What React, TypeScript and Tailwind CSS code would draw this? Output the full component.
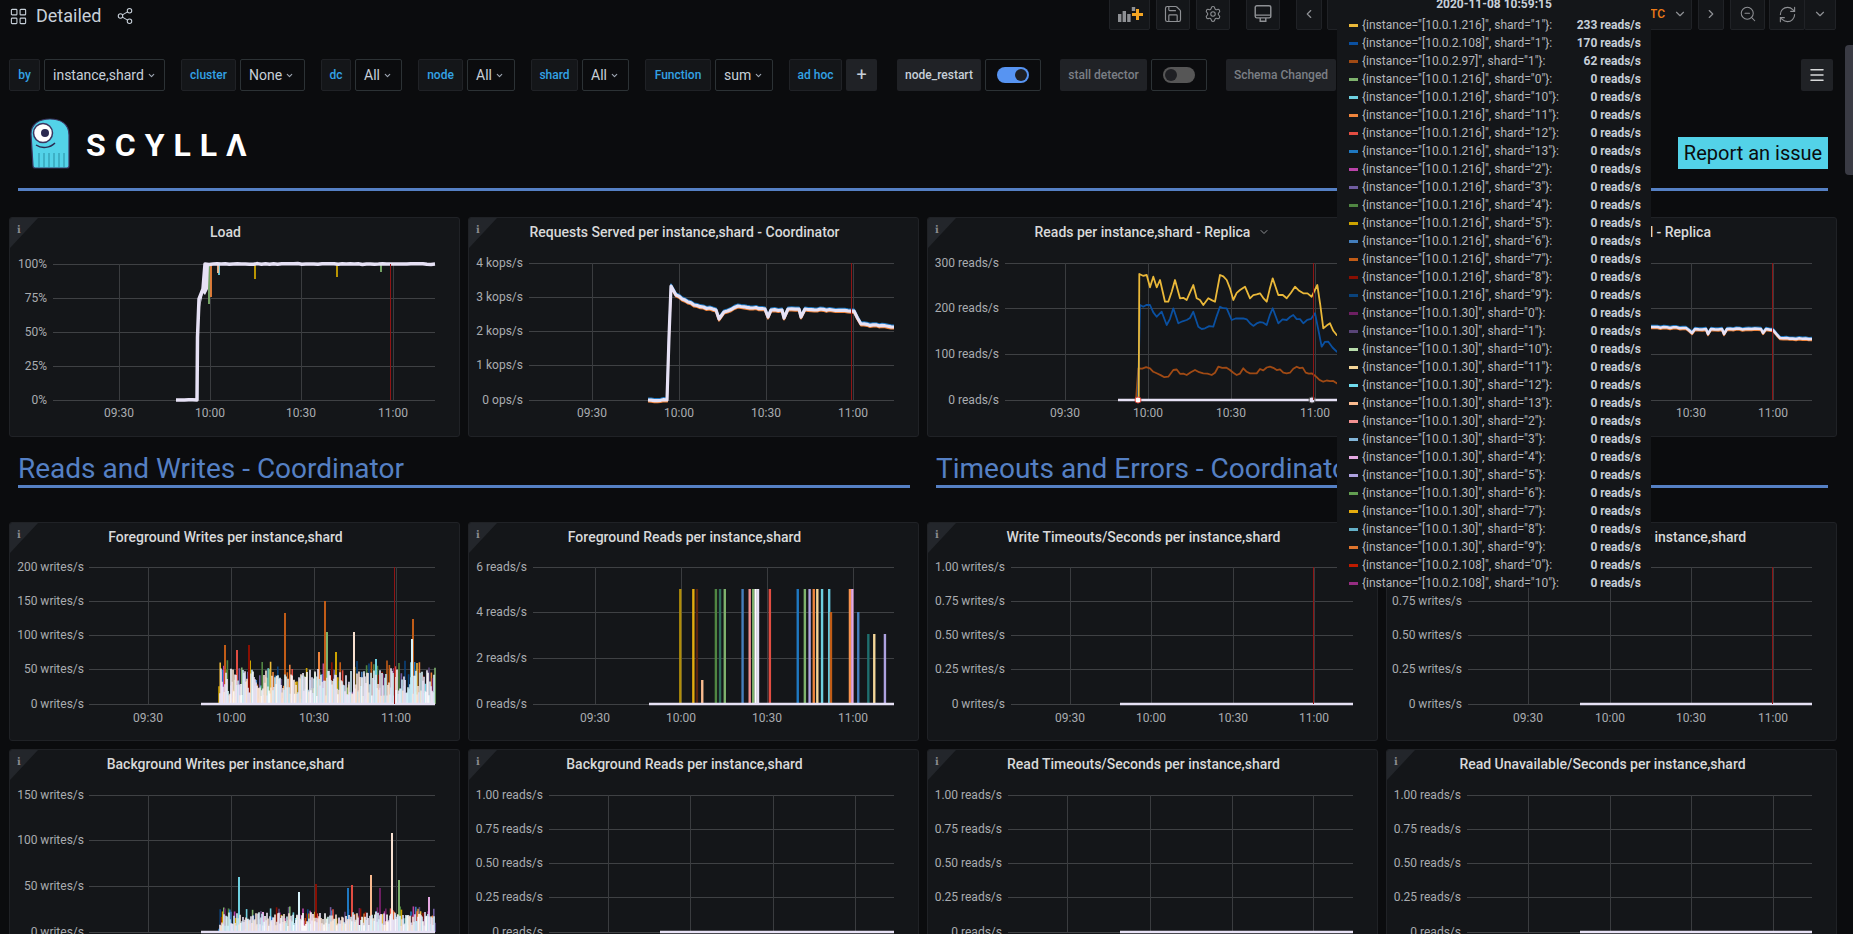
import type { ReactNode } from 'react'
import { ChevronDown, ChevronLeft, ChevronRight, LayoutGrid, Menu, RefreshCw, Save, Settings, Share2, ZoomOut } from 'lucide-react'

const palette = ['#7eb26d', '#eab839', '#6ed0e0', '#ef843c', '#e24d42', '#1f78c1', '#ba43a9', '#705da0', '#508642', '#cca300', '#447ebc', '#c15c17', '#890f02', '#0a437c', '#6d1f62', '#584477']
const pale = ['#e6e1f5', '#efe9fb', '#f8e8dc', '#d8f3fa', '#ffffff', '#e6e1f5', '#fbe3d0', '#c4e8f3']

function makeRandom(seed: number) {
  let s = seed
  return () => {
    s = (s * 16807) % 2147483647
    return (s % 10000) / 10000
  }
}

type Pt = [number, number]

// subdivide a path and add a bit of noise so it looks like a metric
function jitter(points: Pt[], amp: number, step: number, seed: number) {
  const r = makeRandom(seed)
  const out: Pt[] = []
  points.forEach((p, i) => {
    out.push(p)
    const next = points[i + 1]
    if (!next) return
    const n = Math.floor((next[0] - p[0]) / step)
    for (let k = 1; k < n; k++) {
      const t = k / n
      out.push([p[0] + (next[0] - p[0]) * t, p[1] + (next[1] - p[1]) * t + (r() - 0.5) * amp])
    }
  })
  return out.map((p) => `${p[0].toFixed(1)},${p[1].toFixed(1)}`).join(' ')
}

function Line({ d, color, w = 1.5, dy = 0 }: { d: string; color: string; w?: number; dy?: number }) {
  return <polyline points={d} fill="none" stroke={color} strokeWidth={w} strokeLinejoin="round" transform={`translate(0 ${dy})`} />
}

function Baseline({ from, y = 183 }: { from: number; y?: number }) {
  return <line x1={from} x2={426} y1={y} y2={y} stroke="#e6e1f5" strokeWidth={2.5} />
}

function Noise({ seed, from, y, high, paleHigh, floor, bigs }: { seed: number; from: number; y: number; high: number; paleHigh: number; floor: number; bigs: [number, number, string][] }) {
  const r = makeRandom(seed)
  const lines: ReactNode[] = []
  for (let x = from; x < 426; x += 1.2) {
    lines.push(<line key={`a${x}`} x1={x} x2={x} y1={y} y2={y - r() * high} stroke={palette[Math.floor(r() * palette.length)]} strokeWidth={1.6} />)
  }
  bigs.forEach(([x, top, c]) => {
    lines.push(<line key={`b${x}`} x1={x} x2={x} y1={y} y2={top} stroke={c} strokeWidth={2} />)
  })
  for (let x = from + 1; x < 426; x += 1) {
    const h = floor + r() * paleHigh
    lines.push(<line key={`c${x}`} x1={x} x2={x} y1={y} y2={y - h} stroke={pale[Math.floor(r() * pale.length)]} strokeWidth={1.6} />)
  }
  return <>{lines}</>
}

interface ChartProps {
  labelRight: number
  left: number
  yTicks: [string, number][]
  xTicks: number[]
  red?: number
  xLabels?: boolean
  children?: ReactNode
}

const timeLabels = ['09:30', '10:00', '10:30', '11:00']

function Chart({ labelRight, left, yTicks, xTicks, red, xLabels = true, children }: ChartProps) {
  const top = yTicks[0][1]
  const bottom = yTicks[yTicks.length - 1][1]
  return (
    <svg viewBox="1 31 449 188" className="block h-[188px] w-[449px]">
      {yTicks.map(([label, y]) => (
        <g key={label}>
          <line x1={left} x2={426} y1={y + 0.5} y2={y + 0.5} stroke="#3f4144" />
          <text x={labelRight} y={y + 4} textAnchor="end" fontSize={12} fill="#a9acb0">{label}</text>
        </g>
      ))}
      {xTicks.map((x, i) => (
        <g key={x}>
          <line x1={x + 0.5} x2={x + 0.5} y1={top} y2={bottom} stroke="#3a3c3f" />
          {xLabels && <text x={x} y={200} textAnchor="middle" fontSize={12} fill="#a9acb0">{timeLabels[i]}</text>}
        </g>
      ))}
      {children}
      {red !== undefined && <line x1={red + 0.5} x2={red + 0.5} y1={top} y2={bottom} stroke="#8e1515" />}
    </svg>
  )
}

function Panel({ title, caret, className, children }: { title: string; caret?: boolean; className: string; children: ReactNode }) {
  return (
    <div className={`relative overflow-hidden rounded-[3px] border border-[#202226] bg-[#141619] ${className}`}>
      <div className="absolute left-0 top-0 h-0 w-0 border-r-[28px] border-t-[30px] border-r-transparent border-t-[#23262b]" />
      <span className="absolute left-[7px] top-[3px] font-serif text-xs font-bold text-[#8a8c90]">i</span>
      <div className={`flex h-[30px] items-center justify-center gap-2 pb-[3px] text-sm font-medium text-[#d8d9da] ${caret ? '' : 'pr-[18px]'}`}>
        {title}
        {caret && <ChevronDown size={12} className="text-[#8e9094]" />}
      </div>
      {children}
    </div>
  )
}

const load = jitter([[167, 183], [188, 183], [188.5, 120], [190, 82], [194, 72], [196, 47], [426, 47]], 0.8, 4, 11)
const served = jitter([[180, 183], [199, 183], [201, 120], [203, 69], [208, 78], [226, 88], [248, 93], [251, 102], [256, 95], [270, 89], [297, 92], [300, 100], [303, 93], [314, 93], [316, 101], [320, 92], [331, 92], [333, 100], [337, 92], [386, 94], [393, 107], [426, 110]], 1.2, 3, 23)
const replica = jitter([[200, 183], [202, 90], [230, 104], [265, 110], [300, 111], [306, 116], [309, 112], [320, 112], [322, 117], [325, 112], [336, 112], [338, 117], [341, 112], [375, 112], [377, 116], [380, 112], [387, 113], [394, 121], [426, 122]], 1, 3, 31)

// zoomed pixel coordinates of the three visible read lines
const toRel = (list: number[][]): Pt[] => list.map(([x, y]) => [x / 3 - 7, y / 3 - 7])
const yellow = jitter(toRel([[656, 570], [658, 192], [680, 195], [690, 232], [700, 200], [710, 232], [720, 210], [735, 275], [745, 275], [765, 210], [780, 265], [800, 270], [820, 225], [830, 265], [850, 285], [865, 265], [885, 275], [900, 195], [920, 210], [940, 270], [960, 240], [975, 230], [990, 265], [1020, 250], [1040, 275], [1058, 205], [1075, 255], [1100, 265], [1125, 230], [1150, 250], [1175, 260], [1192, 225], [1210, 355], [1230, 340], [1250, 375], [1300, 400]]), 5, 3, 7)
const blue = jitter(toRel([[654, 570], [660, 285], [690, 285], [710, 320], [725, 305], [740, 345], [760, 295], [775, 340], [800, 330], [820, 305], [835, 350], [855, 355], [880, 350], [900, 290], [920, 295], [935, 330], [970, 325], [990, 340], [1040, 345], [1058, 295], [1075, 340], [1100, 330], [1120, 315], [1150, 340], [1185, 310], [1205, 410], [1225, 395], [1250, 425], [1300, 440]]), 5, 3, 13)
const brown = jitter(toRel([[648, 570], [655, 475], [690, 475], [710, 490], [745, 500], [760, 480], [800, 495], [825, 480], [850, 490], [875, 495], [895, 470], [930, 480], [950, 495], [970, 475], [1000, 490], [1050, 470], [1100, 490], [1130, 470], [1175, 490], [1210, 515], [1250, 520], [1300, 525]]), 4, 3, 17)

const fgReads: [number, string, number][] = [
  [1147, '#b08d0a', 67], [1169, '#e5ac0e', 67], [1175, '#5a2410', 67], [1184, '#f9ba8f', 158], [1207, '#508642', 67], [1214, '#2f6f5a', 67], [1222, '#7eb26d', 67],
  [1252, '#447ebc', 67], [1264, '#f29191', 67], [1270, '#7eb26d', 67], [1274, '#ffffff', 67], [1278, '#e6e1f5', 67], [1298, '#e24d42', 67], [1345, '#1f78c1', 67],
  [1357, '#7eb26d', 67], [1365, '#aea2e0', 67], [1372, '#ef843c', 67], [1378, '#f4d598', 67], [1386, '#6ed0e0', 67], [1398, '#65c5db', 67], [1401, '#c15c17', 90],
  [1433, '#f9934e', 67], [1437, '#e5a8e2', 67], [1447, '#447ebc', 90], [1464, '#1f6f6f', 112], [1474, '#f4d598', 112], [1492, '#aea2e0', 112],
]

const pctTicks: [string, number][] = [['100%', 47], ['75%', 81], ['50%', 115], ['25%', 149], ['0%', 183]]
const unitTicks = (unit: string, ys: number[]): [string, number][] => ['1.00', '0.75', '0.50', '0.25', '0'].map((v, i) => [`${v} ${unit}`, ys[i]])
const row2Ys = [45, 79, 113, 147, 182]
const row3Ys = [46, 80, 114, 148, 183]

function LoadLines() {
  const dips: [number, number, string][] = [[246, 62, '#cca300'], [328, 60, '#cca300'], [372, 55, '#7eb26d'], [210, 58, '#6ed0e0'], [200, 87, '#7eb26d'], [202, 80, '#ef843c'], [209, 56, '#f9ba8f']]
  return (
    <>
      {dips.map(([x, y, c]) => (
        <line key={x} x1={x} x2={x} y1={47} y2={y} stroke={c} strokeWidth={1.8} />
      ))}
      <path d="M191 90 L194 60 L196 47 L200 47 L199 72 L196 78 L194 76 Z" fill="#e6e1f5" />
      <Line d={load} color="#e6e1f5" w={3.5} />
    </>
  )
}

function Row({ className, children }: { className: string; children: ReactNode }) {
  return <div className={`grid grid-cols-4 gap-2 pl-[9px] pr-4 ${className}`}>{children}</div>
}

function TopButton({ className, children }: { className: string; children: ReactNode }) {
  return <div className={`flex h-8 items-center justify-center rounded-b-[2px] border border-[#202226] bg-[#141619] text-[#8e9094] ${className}`}>{children}</div>
}

function VarLabel({ className, children }: { className: string; children: ReactNode }) {
  return <div className={`flex h-8 shrink-0 items-center justify-center rounded-[2px] border border-[#202226] bg-[#141619] text-xs font-medium text-[#33a2e5] ${className}`}>{children}</div>
}

function VarValue({ className, children }: { className: string; children: ReactNode }) {
  return (
    <div className={`flex h-8 shrink-0 items-center gap-[3px] rounded-[2px] border border-[#2c3235] bg-[#0b0c0e] pl-2 text-sm text-[#c7d0d9] ${className}`}>
      {children}
      <ChevronDown size={9} strokeWidth={3} className="text-[#9fa7b3]" />
    </div>
  )
}

function Variable({ label, labelW, value, valueW }: { label: string; labelW: string; value: string; valueW: string }) {
  return (
    <div className="flex gap-1">
      <VarLabel className={labelW}>{label}</VarLabel>
      <VarValue className={valueW}>{value}</VarValue>
    </div>
  )
}

function Toggle({ on, label, labelW, dim }: { on: boolean; label: string; labelW: string; dim?: boolean }) {
  return (
    <div className="flex gap-1">
      <div className={`flex h-8 shrink-0 items-center justify-center rounded-[2px] bg-[#202226] text-xs font-medium ${dim ? 'text-[#7b7f85]' : 'text-[#c7d0d9]'} ${labelW}`}>{label}</div>
      <div className="flex h-8 w-14 items-center justify-center rounded-[2px] border border-[#2c3235] bg-[#0b0c0e]">
        <div className={`flex h-4 w-8 items-center rounded-full px-[2px] ${on ? 'justify-end bg-[#5794f2]' : 'justify-start bg-[#565656]'}`}>
          <div className="h-3 w-3 rounded-full bg-[#1f2024]" />
        </div>
      </div>
    </div>
  )
}

const tooltipRows: [string, string, string, string][] = [
  ['#eab839', '10.0.1.216', '1', '233'], ['#0a50a1', '10.0.2.108', '1', '170'], ['#a04a14', '10.0.2.97', '1', '62'], ['#7eb26d', '10.0.1.216', '0', '0'],
  ['#6ed0e0', '10.0.1.216', '10', '0'], ['#ef843c', '10.0.1.216', '11', '0'], ['#e24d42', '10.0.1.216', '12', '0'], ['#1f78c1', '10.0.1.216', '13', '0'],
  ['#ba43a9', '10.0.1.216', '2', '0'], ['#705da0', '10.0.1.216', '3', '0'], ['#508642', '10.0.1.216', '4', '0'], ['#cca300', '10.0.1.216', '5', '0'],
  ['#447ebc', '10.0.1.216', '6', '0'], ['#c15c17', '10.0.1.216', '7', '0'], ['#890f02', '10.0.1.216', '8', '0'], ['#0a437c', '10.0.1.216', '9', '0'],
  ['#6d1f62', '10.0.1.30', '0', '0'], ['#584477', '10.0.1.30', '1', '0'], ['#b7dbab', '10.0.1.30', '10', '0'], ['#f4d598', '10.0.1.30', '11', '0'],
  ['#70dbed', '10.0.1.30', '12', '0'], ['#f9ba8f', '10.0.1.30', '13', '0'], ['#f29191', '10.0.1.30', '2', '0'], ['#82b5d8', '10.0.1.30', '3', '0'],
  ['#e5a8e2', '10.0.1.30', '4', '0'], ['#aea2e0', '10.0.1.30', '5', '0'], ['#629e51', '10.0.1.30', '6', '0'], ['#e5ac0e', '10.0.1.30', '7', '0'],
  ['#64b0c8', '10.0.1.30', '8', '0'], ['#e0752d', '10.0.1.30', '9', '0'], ['#bf1b00', '10.0.2.108', '0', '0'], ['#962d82', '10.0.2.108', '10', '0'],
]

function Tooltip() {
  return (
    <div className="absolute left-[1337px] top-[-5px] h-[593px] w-[314px] bg-[#141619] pl-3 pr-[10px] text-xs leading-[18px]">
      <div className="pr-[2px] text-center font-bold text-[#c7d0d9]">2020-11-08 10:59:15</div>
      <div className="mt-[3px]">
        {tooltipRows.map(([color, ip, shard, val]) => (
          <div key={ip + shard} className="flex h-[18px] items-center">
            <span className="mr-1 h-[3px] w-[9px] shrink-0" style={{ backgroundColor: color }} />
            <span className="flex-1 text-[#b4b7bb]">{`{instance="[${ip}]", shard="${shard}"}:`}</span>
            <span className="font-bold text-[#c7d0d9]">{val} reads/s</span>
          </div>
        ))}
      </div>
    </div>
  )
}

function ScyllaMark() {
  return (
    <svg viewBox="0 0 40 52" className="h-[52px] w-10 shrink-0">
      <path d="M1 16 C1 6 9 1 20 1 C31 1 39 6 39 17 L39 48 Q39 50 37 50 L5 50 Q3 50 3 48 Z" fill="#53d2e8" stroke="#3b3560" strokeWidth={1.2} />
      <circle cx={13} cy={15} r={9.5} fill="#ffffff" stroke="#3b3560" strokeWidth={1.5} />
      <path d="M14 7 A8 8 0 0 1 14 23 A6 6 0 0 0 14 7 Z" fill="#2b2950" />
      <circle cx={15} cy={15} r={4} fill="#2b2950" />
      <path d="M6 27 C12 31 20 30 25 25" fill="none" stroke="#2b2950" strokeWidth={1.5} />
      {[9, 14, 19, 24, 29, 34].map((x) => (
        <line key={x} x1={x} x2={x} y1={35} y2={50} stroke="#2b8ea3" strokeWidth={1} />
      ))}
    </svg>
  )
}

export default function App() {
  return (
    <div className="relative h-[934px] w-full overflow-hidden bg-[#0b0c0e] [font-family:Roboto,sans-serif]">
      <div className="flex h-[30px] items-start">
        <div className="flex h-8 items-center pl-[9px] text-[#c7d0d9]">
          <LayoutGrid size={19} strokeWidth={1.4} />
          <span className="ml-2 text-lg">Detailed</span>
          <Share2 size={18} strokeWidth={1.4} className="ml-[14px]" />
        </div>
        <div className="ml-auto mr-[17px] mt-[-2px] flex gap-[6px]">
          <TopButton className="w-[41px]">
            <svg viewBox="0 0 26 18" className="h-[18px] w-[26px]">
              <path d="M1 9h3.4v8H1zM5.6 6H9v11H5.6zM10.2 9h3.4v8h-3.4zM14.8 2h3.4v4h-3.4z" fill="#8e9094" />
              <path d="M19 4h3v4h4v3h-4v4h-3v-4h-4V8h4z" fill="#f5a623" />
            </svg>
          </TopButton>
          <TopButton className="w-[34px]"><Save size={20} strokeWidth={1.4} /></TopButton>
          <TopButton className="w-[34px]"><Settings size={18} strokeWidth={1.4} /></TopButton>
          <TopButton className="ml-[10px] w-[34px]">
            <svg viewBox="0 0 18 18" className="h-5 w-5" fill="none" stroke="currentColor" strokeWidth={1.3}>
              <rect x="2" y="1.5" width="14" height="11" rx="1.5" />
              <path d="M2 10h14M6.5 12.5v3h5v-3" />
            </svg>
          </TopButton>
          <TopButton className="ml-[10px] w-[26px]"><ChevronLeft size={14} /></TopButton>
          <TopButton className="ml-[-1px] w-[365px] justify-end gap-2 pr-1">
            <span className="text-xs font-medium text-[#eb7b18]">UTC</span>
            <ChevronDown size={14} />
          </TopButton>
          <TopButton className="w-[26px]"><ChevronRight size={14} /></TopButton>
          <TopButton className="w-[35px]"><ZoomOut size={18} strokeWidth={1.4} /></TopButton>
          <div className="ml-[-2px] flex">
            <TopButton className="w-[36px]"><RefreshCw size={19} strokeWidth={1.4} /></TopButton>
            <TopButton className="ml-[-1px] w-[32px]"><ChevronDown size={14} /></TopButton>
          </div>
        </div>
      </div>

      <div className="mt-[29px] flex gap-4 pl-[9px] pr-5">
        <Variable label="by" labelW="w-[31px]" value="instance,shard" valueW="w-[121px]" />
        <Variable label="cluster" labelW="w-[55px]" value="None" valueW="w-[65px]" />
        <Variable label="dc" labelW="w-[30px]" value="All" valueW="w-[47px]" />
        <Variable label="node" labelW="w-[45px]" value="All" valueW="w-[48px]" />
        <Variable label="shard" labelW="w-[47px]" value="All" valueW="w-[47px]" />
        <Variable label="Function" labelW="w-[66px]" value="sum" valueW="w-[58px]" />
        <div className="flex gap-1">
          <VarLabel className="w-[53px]">ad hoc</VarLabel>
          <div className="flex h-8 w-[31px] items-center justify-center rounded-[2px] bg-[#202226] text-[#c7d0d9]">
            <span className="text-lg leading-none">+</span>
          </div>
        </div>
        <div className="ml-1"><Toggle on label="node_restart" labelW="w-[84px]" /></div>
        <div className="ml-[3px]"><Toggle on={false} label="stall detector" labelW="w-[87px]" dim /></div>
        <div className="ml-[3px] flex h-8 w-[110px] items-center justify-center rounded-[2px] bg-[#202226] text-xs font-medium text-[#7b7f85]">Schema Changed</div>
        <div className="ml-auto flex h-8 w-8 items-center justify-center rounded-[2px] bg-[#202226] text-[#d8d9da]">
          <Menu size={18} strokeWidth={2} />
        </div>
      </div>

      <div className="ml-[18px] mr-[25px] mt-[25px] h-[75px] border-b-[3px] border-[#5580c4]">
        <div className="flex items-start justify-between">
          <div className="ml-3 flex items-center">
            <ScyllaMark />
            <span className="ml-4 mt-[3px] text-[32px] font-bold leading-[52px] tracking-[9px] text-white">SCYLLΛ</span>
          </div>
          <div className="mt-[21px] flex h-8 w-[150px] items-center justify-center bg-[#53d2e8] text-[20px] text-[#0b0c0e]">Report an issue</div>
        </div>
      </div>

      <Row className="mt-[26px] h-[220px]">
        <Panel title="Load" className="h-[220px]">
          <Chart labelRight={38} left={44} yTicks={pctTicks} xTicks={[110, 201, 292, 384]} red={381}>
            <LoadLines />
          </Chart>
        </Panel>
        <Panel title="Requests Served per instance,shard - Coordinator" className="h-[220px]">
          <Chart labelRight={55} left={61} yTicks={[['4 kops/s', 46], ['3 kops/s', 80], ['2 kops/s', 114], ['1 kops/s', 148], ['0 ops/s', 183]]} xTicks={[124, 211, 298, 385]} red={383}>
            <Line d={served} color="#1f78c1" w={2} dy={-1.6} />
            <Line d={served} color="#ef843c" w={2} dy={1.6} />
            <Line d={served} color="#e6e1f5" w={3.2} />
          </Chart>
        </Panel>
        <Panel title="Reads per instance,shard - Replica" caret className="h-[220px]">
          <Chart labelRight={72} left={78} yTicks={[['300 reads/s', 46], ['200 reads/s', 91], ['100 reads/s', 137], ['0 reads/s', 183]]} xTicks={[138, 221, 304, 388]} red={386}>
            <Line d={brown} color="#a04a14" w={1.8} />
            <Line d={blue} color="#0a50a1" w={1.8} />
            <Line d={yellow} color="#eab839" w={1.8} />
            <Baseline from={191} />
            <circle cx={211} cy={183} r={3} fill="#ffffff" stroke="#e24d42" />
            <circle cx={385} cy={183} r={3} fill="#e6e1f5" stroke="#555" />
          </Chart>
        </Panel>
        <Panel title="Writes per instance,shard - Replica" className="h-[220px]">
          <Chart labelRight={72} left={78} yTicks={[['3 kops/s', 46], ['2 kops/s', 91], ['1 kops/s', 137], ['0 ops/s', 183]]} xTicks={[139, 222, 305, 387]} red={386}>
            <Line d={replica} color="#1f78c1" w={1.6} dy={-1.4} />
            <Line d={replica} color="#ef843c" w={1.6} dy={1.4} />
            <Line d={replica} color="#e6e1f5" w={2.6} />
          </Chart>
        </Panel>
      </Row>

      <div className="ml-[18px] mr-[25px] mt-2 grid grid-cols-2 gap-[26px]">
        <div className="flex h-[43px] items-end border-b-[3px] border-[#5580c4] text-[28px] leading-8 text-[#5580c4]">Reads and Writes - Coordinator</div>
        <div className="flex h-[43px] items-end border-b-[3px] border-[#5580c4] text-[28px] leading-8 text-[#5580c4]">Timeouts and Errors - Coordinator</div>
      </div>

      <Row className="mt-[34px]">
        <Panel title="Foreground Writes per instance,shard" className="h-[219px]">
          <Chart labelRight={75} left={80} yTicks={[['200 writes/s', 45], ['150 writes/s', 79], ['100 writes/s', 113], ['50 writes/s', 147], ['0 writes/s', 182]]} xTicks={[139, 222, 305, 387]} red={385}>
            <Noise seed={5} from={210} y={182} high={44} paleHigh={28} floor={8} bigs={[[216, 123, '#c15c17'], [228, 128, '#e24d42'], [240, 123, '#890f02'], [276, 91, '#c15c17'], [316, 79, '#c15c17'], [318, 110, '#7eb26d'], [345, 110, '#f8e0d0'], [404, 97, '#c15c17'], [403, 117, '#d8f3fa'], [310, 130, '#ef843c'], [327, 130, '#cca300'], [367, 137, '#6ed0e0']]} />
            <Baseline from={192} y={182} />
          </Chart>
        </Panel>
        <Panel title="Foreground Reads per instance,shard" className="h-[219px]">
          <Chart labelRight={59} left={65} yTicks={[['6 reads/s', 45], ['4 reads/s', 90], ['2 reads/s', 136], ['0 reads/s', 182]]} xTicks={[127, 213, 299, 385]}>
            {fgReads.map(([z, c, top]) => (
              <line key={z} x1={z / 1.686 - 468} x2={z / 1.686 - 468} y1={182} y2={top} stroke={c} strokeWidth={2.4} />
            ))}
            <Baseline from={181} y={182} />
          </Chart>
        </Panel>
        <Panel title="Write Timeouts/Seconds per instance,shard" className="h-[219px]">
          <Chart labelRight={78} left={84} yTicks={unitTicks('writes/s', row2Ys)} xTicks={[143, 224, 306, 387]} red={386}>
            <Baseline from={193} y={182} />
          </Chart>
        </Panel>
        <Panel title="Write Unavailable/Seconds per instance,shard" className="h-[219px]">
          <Chart labelRight={76} left={82} yTicks={unitTicks('writes/s', row2Ys)} xTicks={[142, 224, 305, 387]} red={386}>
            <Baseline from={194} y={182} />
          </Chart>
        </Panel>
      </Row>

      <Row className="mt-2">
        <Panel title="Background Writes per instance,shard" className="h-[219px]">
          <Chart labelRight={75} left={80} yTicks={[['150 writes/s', 46], ['100 writes/s', 91], ['50 writes/s', 137], ['0 writes/s', 183]]} xTicks={[139, 222, 305, 387]} xLabels={false}>
            <Noise seed={9} from={210} y={183} high={26} paleHigh={14} floor={6} bigs={[[230, 128, '#6ed0e0'], [254, 163, '#e5a8e2'], [290, 143, '#d8f3fa'], [307, 135, '#890f02'], [339, 139, '#1f78c1'], [343, 136, '#e24d42'], [362, 126, '#f9ba8f'], [371, 139, '#6d1f62'], [383, 84, '#f8e0d0'], [390, 131, '#7eb26d'], [420, 148, '#e5a8e2']]} />
            <Baseline from={192} />
          </Chart>
        </Panel>
        <Panel title="Background Reads per instance,shard" className="h-[219px]">
          <Chart labelRight={75} left={81} yTicks={unitTicks('reads/s', row3Ys)} xTicks={[140, 222, 305, 387]} xLabels={false}>
            <Baseline from={192} />
          </Chart>
        </Panel>
        <Panel title="Read Timeouts/Seconds per instance,shard" className="h-[219px]">
          <Chart labelRight={75} left={81} yTicks={unitTicks('reads/s', row3Ys)} xTicks={[140, 223, 305, 386]} xLabels={false}>
            <Baseline from={193} />
          </Chart>
        </Panel>
        <Panel title="Read Unavailable/Seconds per instance,shard" className="h-[219px]">
          <Chart labelRight={75} left={81} yTicks={unitTicks('reads/s', row3Ys)} xTicks={[142, 224, 305, 387]} xLabels={false}>
            <Baseline from={194} />
          </Chart>
        </Panel>
      </Row>

      <Tooltip />
      <div className="absolute right-0 top-[45px] h-[130px] w-2 rounded-l-[4px] bg-[#3a3b44]" />
    </div>
  )
}
